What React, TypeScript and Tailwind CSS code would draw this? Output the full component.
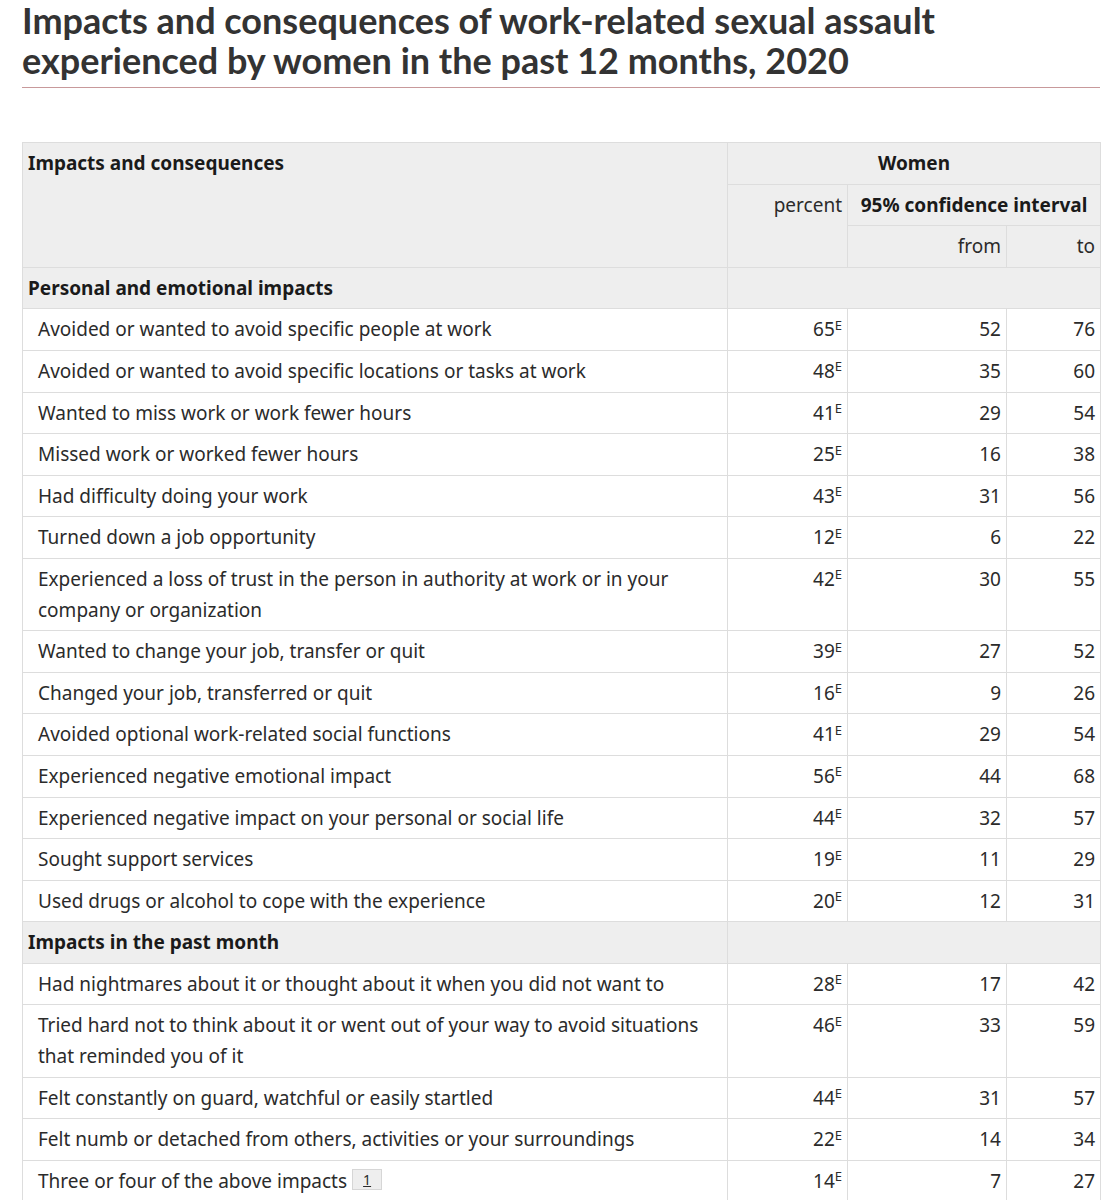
import React from "react";

type Row = { label: string; p: string; f: string; t: string; note?: boolean };

const personal: Row[] = [
  { label: "Avoided or wanted to avoid specific people at work", p: "65", f: "52", t: "76" },
  { label: "Avoided or wanted to avoid specific locations or tasks at work", p: "48", f: "35", t: "60" },
  { label: "Wanted to miss work or work fewer hours", p: "41", f: "29", t: "54" },
  { label: "Missed work or worked fewer hours", p: "25", f: "16", t: "38" },
  { label: "Had difficulty doing your work", p: "43", f: "31", t: "56" },
  { label: "Turned down a job opportunity", p: "12", f: "6", t: "22" },
  {
    label:
      "Experienced a loss of trust in the person in authority at work or in your company or organization",
    p: "42",
    f: "30",
    t: "55",
  },
  { label: "Wanted to change your job, transfer or quit", p: "39", f: "27", t: "52" },
  { label: "Changed your job, transferred or quit", p: "16", f: "9", t: "26" },
  { label: "Avoided optional work-related social functions", p: "41", f: "29", t: "54" },
  { label: "Experienced negative emotional impact", p: "56", f: "44", t: "68" },
  { label: "Experienced negative impact on your personal or social life", p: "44", f: "32", t: "57" },
  { label: "Sought support services", p: "19", f: "11", t: "29" },
  { label: "Used drugs or alcohol to cope with the experience", p: "20", f: "12", t: "31" },
];

const month: Row[] = [
  { label: "Had nightmares about it or thought about it when you did not want to", p: "28", f: "17", t: "42" },
  {
    label:
      "Tried hard not to think about it or went out of your way to avoid situations that reminded you of it",
    p: "46",
    f: "33",
    t: "59",
  },
  { label: "Felt constantly on guard, watchful or easily startled", p: "44", f: "31", t: "57" },
  { label: "Felt numb or detached from others, activities or your surroundings", p: "22", f: "14", t: "34" },
  { label: "Three or four of the above impacts", p: "14", f: "7", t: "27", note: true },
];

const cell = "border border-[#dddddd] py-[5px] leading-[30.6px] align-top";

function DataRow({ r }: { r: Row }) {
  return (
    <tr>
      <td className={`${cell} pl-[15px] pr-[5px]`}>
        {r.label}
        {r.note && (
          <span className="ml-[5px] inline-block align-[3px] border border-[#d6d6d6] bg-[#eeeeee] px-[10px] text-[14px] leading-[19px] underline">
            1
          </span>
        )}
      </td>
      <td className={`${cell} pr-[5px] text-right`}>
        {r.p}
        <sup className="text-[13px]">E</sup>
      </td>
      <td className={`${cell} border-l-[#cccccc] pr-[5px] text-right`}>{r.f}</td>
      <td className={`${cell} pr-[5px] text-right`}>{r.t}</td>
    </tr>
  );
}

function Section({ title }: { title: string }) {
  return (
    <tr className="bg-[#eeeeee]">
      <th className={`${cell} pl-[5px] text-left font-bold text-[#1a1a1a]`}>{title}</th>
      <td className={cell} colSpan={3}></td>
    </tr>
  );
}

export default function App() {
  return (
    <div className="bg-white pl-[22px] pr-[15px] pb-10 text-[#2b2b2b]">
      <h1
        className="border-b border-[#c8999b] pb-[7px] text-[36px] font-bold leading-[40px] text-[#333333]"
        style={{ fontFamily: "Lato, 'Noto Sans', sans-serif" }}
      >
        Impacts and consequences of work-related sexual assault
        <br />
        experienced by women in the past 12 months, 2020
      </h1>
      <table
        className="mt-[54px] w-[1078px] table-fixed border-collapse border border-[#dddddd] text-[19px] text-[#2b2b2b]"
        style={{ fontFamily: "'Noto Sans', sans-serif" }}
      >
        <colgroup>
          <col className="w-[705px]" />
          <col className="w-[120px]" />
          <col className="w-[159px]" />
          <col className="w-[94px]" />
        </colgroup>
        <thead>
          <tr className="bg-[#eeeeee]">
            <th rowSpan={3} className={`${cell} pl-[5px] text-left font-bold text-[#1a1a1a]`}>
              Impacts and consequences
            </th>
            <th colSpan={3} className={`${cell} text-center font-bold text-[#1a1a1a]`}>
              Women
            </th>
          </tr>
          <tr className="bg-[#eeeeee]">
            <th rowSpan={2} className={`${cell} pr-[5px] text-right font-normal`}>
              percent
            </th>
            <th colSpan={2} className={`${cell} text-center font-bold text-[#1a1a1a]`}>
              95% confidence interval
            </th>
          </tr>
          <tr className="bg-[#eeeeee]">
            <th className={`${cell} pr-[5px] text-right font-normal`}>from</th>
            <th className={`${cell} pr-[5px] text-right font-normal`}>to</th>
          </tr>
        </thead>
        <tbody>
          <Section title="Personal and emotional impacts" />
          {personal.map((r) => (
            <DataRow key={r.label} r={r} />
          ))}
          <Section title="Impacts in the past month" />
          {month.map((r) => (
            <DataRow key={r.label} r={r} />
          ))}
        </tbody>
      </table>
    </div>
  );
}
